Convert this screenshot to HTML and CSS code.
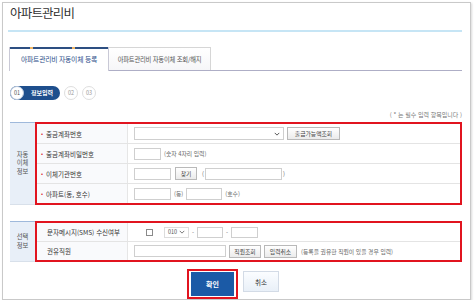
FILE: index.html
```html
<!DOCTYPE html>
<html lang="ko">
<head>
<meta charset="utf-8">
<title>아파트관리비</title>
<link rel="stylesheet" href="styles.css">
</head>
<body>
<div class="frame">
  <h1 class="title">아파트관리비</h1>
  <div class="title-line"></div>

  <div class="tabs">
    <div class="tab active">아파트관리비 자동이체 등록</div>
    <div class="tab">아파트관리비 자동이체 조회/해지</div>
  </div>

  <div class="steps">
    <div class="step-pill"><span class="step-num">01</span><span class="step-label">정보입력</span></div>
    <span class="step-circle">02</span>
    <span class="step-circle">03</span>
  </div>

  <p class="note">( * 는 필수 입력 항목입니다 )</p>

  <div class="form-table">
    <div class="group-head">자동<br>이체<br>정보</div>
    <div class="rows hl">
      <div class="row">
        <div class="label"><span class="bullet">•</span>출금계좌번호</div>
        <div class="value">
          <span class="select w150"><svg class="chev" viewBox="0 0 8 5" width="6" height="4"><path d="M1 1 L4 4 L7 1" fill="none" stroke="#555" stroke-width="1.3"/></svg></span>
          <span class="btn ml3 w53">출금가능액조회</span>
        </div>
      </div>
      <div class="row">
        <div class="label"><span class="bullet">•</span>출금계좌비밀번호</div>
        <div class="value">
          <span class="input w27"></span>
          <span class="hint ml3">(숫자 4자리 입력)</span>
        </div>
      </div>
      <div class="row">
        <div class="label"><span class="bullet">•</span>이체기관번호</div>
        <div class="value">
          <span class="input w37"></span>
          <span class="btn ml4 w22">찾기</span>
          <span class="hint ml5">(</span>
          <span class="input w77 ml1"></span>
          <span class="hint ml1">)</span>
        </div>
      </div>
      <div class="row">
        <div class="label"><span class="bullet">•</span>아파트(동, 호수)</div>
        <div class="value">
          <span class="input w37"></span>
          <span class="hint ml3">(동)</span>
          <span class="input w36 ml3"></span>
          <span class="hint ml3">(호수)</span>
        </div>
      </div>
    </div>
  </div>

  <div class="form-table second">
    <div class="group-head">선택<br>정보</div>
    <div class="rows hl">
      <div class="row">
        <div class="label plain">문자메시지(SMS) 수신여부</div>
        <div class="value">
          <span class="check"></span>
          <span class="select small w25 ml11"><span class="sel-text">010</span><svg class="chev" viewBox="0 0 8 5" width="6" height="4"><path d="M1 1 L4 4 L7 1" fill="none" stroke="#777" stroke-width="1.3"/></svg></span>
          <span class="hint ml3">-</span>
          <span class="input small w26 ml3"></span>
          <span class="hint ml3">-</span>
          <span class="input small w27 ml3"></span>
        </div>
      </div>
      <div class="row">
        <div class="label plain">권유직원</div>
        <div class="value">
          <span class="input w92"></span>
          <span class="btn ml3 w32">직원조회</span>
          <span class="btn ml3 w33">입력취소</span>
          <span class="hint ml4">(등록을 권유한 직원이 있을 경우 입력)</span>
        </div>
      </div>
    </div>
  </div>

  <div class="actions">
    <div class="ok-wrap"><button class="ok">확인</button></div>
    <button class="cancel">취소</button>
  </div>
</div>
</body>
</html>
```
FILE: styles.css
```css
* { box-sizing: border-box; }
html, body { margin: 0; padding: 0; background: #fff; }
body {
  font-family: "Noto Sans CJK KR", "Noto Sans", sans-serif;
  color: #333;
}
.frame {
  margin: 2px 0 0 2px;
  width: 469px;
  height: 298px;
  border: 1px solid #c9c9c9;
  box-shadow: 1px 1px 2px rgba(0,0,0,0.15);
  padding: 0 8px 0 6px;
}
.title {
  margin: 2px 0 0 1px;
  font-size: 12.5px;
  line-height: 16px;
  font-weight: 400;
  letter-spacing: -0.8px;
  color: #333;
}
.title-line {
  margin: 9px 0 0 -1px;
  height: 2px;
  background: #c6e5f5;
}
.tabs {
  margin-top: 15px;
  display: flex;
  height: 24px;
  border-bottom: 1px solid #aeaec6;
}
.tab {
  height: 23px;
  font-size: 6.8px;
  line-height: 21px;
  text-align: center;
  color: #555;
  letter-spacing: -0.2px;
  white-space: nowrap;
}
.tab.active {
  width: 100px;
  margin-bottom: -1px;
  height: 24px;
  color: #1f4b87;
  border-left: 1px solid #c9c9d6;
  border-right: 1px solid #c9c9d6;
  padding-top: 2px;
  background:
    linear-gradient(90deg, #2d4f82 0 20%, #f1b866 20% 23%, #2d4f82 23% 63%, #f1b866 63% 66%, #2d4f82 66%) top / 100% 2px no-repeat,
    #fff;
}
.tab:not(.active) {
  width: 102px;
  border-top: 1px solid #d6d6d6;
  border-right: 1px solid #d6d6d6;
  background: linear-gradient(#fff, #f6f6f8);
  padding-top: 1px;
  font-size: 6.3px;
}
.steps {
  margin-top: 15px;
  margin-left: 1px;
  display: flex;
  align-items: center;
  height: 14px;
}
.step-pill {
  display: flex;
  align-items: center;
  width: 50px;
  height: 14px;
  border-radius: 7px;
  background: #1e4f8d;
}
.step-num {
  width: 14px;
  height: 14px;
  border-radius: 50%;
  background: #fff;
  border: 1px solid #b8c7dc;
  font-size: 5.5px;
  line-height: 12px;
  text-align: center;
  color: #555;
}
.step-label {
  flex: 1;
  text-align: center;
  font-size: 6px;
  font-weight: 700;
  color: #fff;
  line-height: 14px;
}
.step-circle {
  width: 14px;
  height: 14px;
  border-radius: 50%;
  border: 1px solid #dedede;
  font-size: 5.5px;
  line-height: 12px;
  text-align: center;
  color: #999;
  margin-left: 4px;
}
.note {
  margin: 11px 0 0 0;
  text-align: right;
  font-size: 6px;
  line-height: 8px;
  color: #777;
}
.form-table {
  margin: 3px 0 0 1px;
  display: grid;
  grid-template-columns: 25px 427px;
}
.form-table.second { margin-top: 16px; }
.group-head {
  background: #e8eff8;
  border-top: 1px solid #9fb9db;
  border-bottom: 1px solid #d8e0ea;
  display: flex;
  align-items: center;
  justify-content: center;
  text-align: center;
  font-size: 6.3px;
  line-height: 8.5px;
  color: #555;
}
.rows.hl {
  border: 2px solid #e1141f;
}
.row {
  display: grid;
  grid-template-columns: 91px 1fr;
  height: 20px;
  border-bottom: 1px solid #e4e4e4;
}
.row:last-child { border-bottom: none; height: 19px; }
.second .row { height: 19px; }
.second .row:last-child { height: 18px; }
.label {
  background: #f9fafc;
  border-right: 1px solid #e6e6e6;
  display: flex;
  align-items: center;
  padding-left: 4px;
  font-size: 6.5px;
  color: #333;
  white-space: nowrap;
}
.label.plain { padding-left: 10px; }
.bullet {
  color: #d9232e;
  font-size: 6px;
  margin-right: 3px;
}
.value {
  display: flex;
  align-items: center;
  padding-left: 6px;
  font-size: 6px;
  white-space: nowrap;
}
.input, .select {
  display: inline-block;
  height: 12px;
  border: 1px solid #cfcfcf;
  background: #fff;
}
.select {
  display: inline-flex;
  align-items: center;
  justify-content: flex-end;
  padding-right: 3px;
  height: 13px;
}
.small { height: 11px; }
.select.small { justify-content: space-between; padding-left: 3px; border-color: #dcdcdc; }
.sel-text { font-size: 5.5px; color: #555; }
.btn {
  display: inline-flex;
  align-items: center;
  justify-content: center;
  height: 13px;
  border: 1px solid #b9b9b9;
  background: linear-gradient(#fff, #ebebeb);
  font-size: 5.8px;
  color: #444;
}
.hint { font-size: 5.8px; color: #666; }
.check {
  display: inline-block;
  width: 7px;
  height: 7px;
  border: 1px solid #8a8a8a;
  margin-left: 12px;
  background: #fff;
}
.ml1 { margin-left: 1px; }
.ml3 { margin-left: 3px; }
.ml4 { margin-left: 4px; }
.ml5 { margin-left: 5px; }
.ml11 { margin-left: 11px; }
.w22 { width: 22px; }
.w25 { width: 25px; }
.w26 { width: 26px; }
.w27 { width: 27px; }
.w32 { width: 32px; }
.w33 { width: 33px; }
.w36 { width: 36px; }
.w37 { width: 37px; }
.w53 { width: 53px; }
.w77 { width: 77px; }
.w92 { width: 92px; }
.w150 { width: 150px; }
.actions {
  margin-top: 7px;
  display: flex;
  justify-content: center;
  align-items: flex-start;
  padding-right: 5px;
}
.ok-wrap {
  border: 2px solid #e1141f;
  padding: 1px 2px;
}
.ok {
  display: block;
  width: 43px;
  height: 24px;
  border: none;
  background: #1b5aa6;
  color: #fff;
  font-family: inherit;
  font-size: 7px;
  font-weight: 700;
  padding: 0;
}
.cancel {
  margin: 2px 0 0 5px;
  width: 36px;
  height: 21px;
  border: 1px solid #d3dbe6;
  background: linear-gradient(#fbfdff, #e9f0f8);
  color: #333;
  font-family: inherit;
  font-size: 6.5px;
  padding: 0;
}
```
